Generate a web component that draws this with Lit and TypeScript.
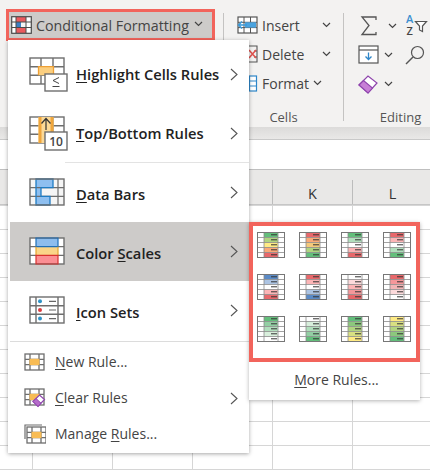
import { LitElement, html, css, svg } from "lit";
import { customElement } from "lit/decorators.js";

const G = "#6e6e6e";
const chevR = html`<svg class="chevr" width="8" height="13" viewBox="0 0 8 13"><path d="M1 1l6 5.5L1 12" fill="none" stroke="#555" stroke-width="1.1"/></svg>`;
const chevD = html`<svg class="chevd" width="9" height="6" viewBox="0 0 9 6"><path d="M1 1l3.5 3.5L8 1" fill="none" stroke="#444" stroke-width="1.2"/></svg>`;

function baseGrid() {
  return svg`<g fill="none" stroke="${G}" stroke-width="1.4">
    <rect x="1" y="1" width="34" height="26"/>
    <path d="M1 9.7h34M1 18.3h34M12 1v26M24 1v26"/></g>`;
}

const iconHighlight = html`<svg width="40" height="36" viewBox="0 0 40 36">
  ${baseGrid()}
  <rect x="9.5" y="9.7" width="15" height="8.6" fill="#fbcf80"/>
  <path d="M9.5 18.3V9.7h15v8.6" fill="none" stroke="#efa035" stroke-width="1.3"/>
  <rect x="16" y="17" width="22" height="17" fill="#fff" stroke="${G}" stroke-width="1.4"/>
  <path d="M30 20.5l-6 3 6 3M23.5 29.5h7" fill="none" stroke="#444" stroke-width="1"/>
</svg>`;

const iconTop = html`<svg width="40" height="36" viewBox="0 0 40 36">
  ${baseGrid()}
  <rect x="9.5" y="1" width="15" height="26" fill="#fcd996"/>
  <rect x="9.5" y="1" width="3" height="26" fill="#f0a63c"/>
  <rect x="21.5" y="1" width="3" height="26" fill="#f0a63c"/>
  <path d="M17 14V2.5M12.5 7.5l4.5-5 4.5 5" fill="none" stroke="#333" stroke-width="1.2"/>
  <rect x="16" y="16" width="22" height="18" fill="#fff" stroke="${G}" stroke-width="1.4"/>
  <text x="27" y="30" font-family="Open Sans, sans-serif" font-size="12" fill="#444" text-anchor="middle">10</text>
</svg>`;

const iconData = html`<svg width="40" height="30" viewBox="0 0 40 30">
  <rect x="1" y="1" width="34" height="26" fill="#f5f5f5"/>
  <rect x="7" y="1" width="17" height="8.7" fill="#8ebff0"/>
  <rect x="7" y="9.7" width="5" height="8.6" fill="#8ebff0"/>
  <rect x="7" y="18.3" width="14" height="8.7" fill="#8ebff0"/>
  <path d="M1 9.7h34M1 18.3h34M29 1v26" fill="none" stroke="${G}" stroke-width="1.2"/>
  <path d="M7 1v26h14v-8.7h-9V9.7h12V1z" fill="none" stroke="#1f7cc4" stroke-width="1.3"/>
  <rect x="1" y="1" width="34" height="26" fill="none" stroke="${G}" stroke-width="1.4"/>
</svg>`;

const iconScale = html`<svg width="40" height="30" viewBox="0 0 40 30">
  <rect x="1" y="1" width="34" height="26" fill="#fff"/>
  <rect x="7" y="1" width="22" height="8.7" fill="#8dbdee"/>
  <rect x="7" y="9.7" width="22" height="8.6" fill="#fad588"/>
  <rect x="7" y="18.3" width="22" height="8.7" fill="#fb8e93"/>
  <path d="M1 9.7h6M29 9.7h6M1 18.3h6M29 18.3h6" stroke="${G}" stroke-width="1.3"/>
  <rect x="1" y="1" width="34" height="26" fill="none" stroke="${G}" stroke-width="1.4"/>
  <path d="M7 9.7V1h22v8.7z" fill="none" stroke="#1f6fb8" stroke-width="1.2"/>
  <path d="M7 18.3V9.7M29 18.3V9.7" stroke="#e4a62f" stroke-width="1.2"/>
  <path d="M7 27v-8.7h22V27z" fill="none" stroke="#d8312f" stroke-width="1.2"/>
</svg>`;

const iconSets = html`<svg width="40" height="30" viewBox="0 0 40 30">
  <g fill="none" stroke="${G}" stroke-width="1.4">
    <rect x="1" y="1" width="34" height="26"/>
    <path d="M1 9.7h34M1 18.3h34M7 1v26M29 1v26"/></g>
  <circle cx="11" cy="5.3" r="2" fill="#2f94c8"/>
  <circle cx="11" cy="14" r="2" fill="#dc3d40"/>
  <circle cx="11" cy="22.6" r="2" fill="#2f94c8"/>
  <path d="M20 5.3h7M20 14h7M20 22.6h7" stroke="#666" stroke-width="1.2"/>
</svg>`;

const smallGrid = svg`<g fill="none" stroke="${G}" stroke-width="1.3">
  <rect x="1" y="1" width="19" height="16"/>
  <path d="M1 6.3h19M1 11.6h19M6 1v16M15 1v16"/></g>`;

const iconNew = html`<svg width="22" height="18" viewBox="0 0 22 18">
  ${smallGrid}<rect x="5.5" y="5.8" width="10" height="6.3" fill="#f8bc55"/>
</svg>`;
const iconClear = html`<svg width="22" height="20" viewBox="0 0 22 20">
  ${smallGrid}<rect x="5.5" y="5.8" width="10" height="6.3" fill="#f8bc55"/>
  <path d="M9 13.5l6.5-6.5 5 4.5-6.5 7z" fill="#fff" stroke="#8e44ad" stroke-width="1.2"/>
  <path d="M9 13.5l3-3 5 4.7-3 3.3z" fill="#b56cc9" stroke="#8e44ad" stroke-width="1"/>
</svg>`;
const iconManage = html`<svg width="22" height="20" viewBox="0 0 22 20">
  <path d="M18 1H1v14" fill="none" stroke="${G}" stroke-width="1.2"/>
  <g transform="translate(2 2)">${smallGrid}<rect x="5.5" y="5.8" width="10" height="6.3" fill="#f8bc55"/></g>
</svg>`;

const iconTitle = html`<svg width="21" height="18" viewBox="0 0 21 18">
  <rect x="0.7" y="0.7" width="19.6" height="16.6" fill="#fff"/>
  <rect x="5" y="1" width="10" height="5" fill="#ea5a5e"/>
  <rect x="5" y="6" width="5" height="5" fill="#3c7fc4"/>
  <rect x="10" y="6" width="5" height="5" fill="#f4f4f4"/>
  <rect x="5" y="11" width="10" height="6" fill="#ea5a5e"/>
  <path d="M.7 6h19.6M.7 11.5h19.6M5 1v16M15 1v16" stroke="#4a4a4a" stroke-width="1" fill="none"/>
  <rect x="0.7" y="0.7" width="19.6" height="16.6" fill="none" stroke="#4a4a4a" stroke-width="1.2"/>
</svg>`;

const iconInsert = html`<svg width="21" height="18" viewBox="0 0 21 18">
  <rect x="1" y="1" width="19" height="16" fill="#fff" stroke="#555" stroke-width="1.2"/>
  <path d="M1 6.3h19M1 11.6h19M7 1v16M13.5 1v16" stroke="#555" stroke-width="1"/>
  <rect x="8" y="6.3" width="11" height="5.3" fill="#4aa3df"/>
  <path d="M10 9H1.5M5 5.5L1.5 9 5 12.5" fill="none" stroke="#3b9ad9" stroke-width="1.5"/>
</svg>`;
const iconDelete = html`<svg width="21" height="18" viewBox="0 0 21 18">
  <path d="M11 1h9v16h-9M20 6h-3M20 12h-3" fill="none" stroke="#555" stroke-width="1.1"/>
  <path d="M12 5l7 8M19 5l-7 8" stroke="#e0504c" stroke-width="1.5"/>
</svg>`;
const iconFormat = html`<svg width="21" height="18" viewBox="0 0 21 18">
  <rect x="12.5" y="2" width="7" height="15" fill="#fff" stroke="#2e86c9" stroke-width="1.2"/>
  <path d="M12.5 7h7M12.5 12h7" stroke="#2e86c9" stroke-width="1"/>
</svg>`;

const iconSigma = html`<svg class="sigma" width="18" height="20" viewBox="0 0 18 20"><path d="M16 4V1H2l7 8.5L2 18.5h14V16" fill="none" stroke="#555" stroke-width="1.3"/></svg>`;
const iconSort = html`<svg class="sort" width="23" height="28" viewBox="0 0 23 28">
  <text x="0" y="13" font-family="Open Sans, sans-serif" font-size="11" font-weight="600" fill="#3b8fd0">A</text>
  <text x="0.5" y="25" font-family="Open Sans, sans-serif" font-size="11" font-weight="600" fill="#444">Z</text>
  <path d="M9.5 11.5h11l-4 4.5v5.5l-3-1.5V16z" fill="#fff" stroke="#555" stroke-width="1.2"/>
</svg>`;
const iconFill = html`<svg width="21" height="19" viewBox="0 0 21 19">
  <rect x="1" y="1" width="19" height="17" fill="#fff" stroke="#555" stroke-width="1.2"/>
  <path d="M1 5h19" stroke="#555" stroke-width="1.2"/>
  <path d="M10.5 7.5v7M7.5 11.5l3 3 3-3" fill="none" stroke="#2e86c9" stroke-width="1.3"/>
</svg>`;
const iconSearch = html`<svg width="21" height="20" viewBox="0 0 21 20"><circle cx="12.5" cy="7.5" r="6" fill="none" stroke="#555" stroke-width="1.2"/><path d="M8 12l-7 7" stroke="#555" stroke-width="1.4"/></svg>`;
const iconEraser = html`<svg width="21" height="20" viewBox="0 0 21 20">
  <path d="M1 11l9-9 9 7-9 10z" fill="#fff" stroke="#8e44ad" stroke-width="1.2"/>
  <path d="M1 11l4.5-4.5 9 7.5-4.5 5z" fill="#c77fd6" stroke="#8e44ad" stroke-width="1.1"/>
</svg>`;

const SCALES: string[][] = [
  ["#63be7b", "#b1d580", "#ffeb84", "#fbaa77", "#e8686b"],
  ["#e8686b", "#fbaa77", "#f5c97a", "#b1d580", "#63be7b"],
  ["#63be7b", "#b1dfbd", "#ffffff", "#fcb5b6", "#e8686b"],
  ["#e8686b", "#fcb5b6", "#ffffff", "#b1dfbd", "#63be7b"],
  ["#5a8ac6", "#acc4e3", "#ffffff", "#fcb5b6", "#e8686b"],
  ["#e8686b", "#fcb5b6", "#ffffff", "#acc4e3", "#5a8ac6"],
  ["#ffffff", "#fcdadb", "#fcb5b6", "#f5979a", "#e8686b"],
  ["#e8686b", "#f5979a", "#f2b5b6", "#fcdadb", "#ffffff"],
  ["#63be7b", "#92cfa3", "#b1dfbd", "#d8efdc", "#ffffff"],
  ["#ffffff", "#d8efdc", "#b1dfbd", "#92cfa3", "#63be7b"],
  ["#63be7b", "#8cc87d", "#b1d580", "#d8e082", "#ffeb84"],
  ["#ffeb84", "#d8e082", "#b1d580", "#8cc87d", "#63be7b"],
];

function scaleIcon(colors: string[]) {
  return html`<svg class="scale" width="28" height="26" viewBox="0 0 28 26">
    <rect x="0.5" y="0.5" width="27" height="25" fill="#fff"/>
    ${colors.map((c, i) => svg`<rect x="7" y="${0.5 + i * 5}" width="14" height="5" fill="${c}"/>`)}
    ${[1, 2, 3, 4].map((i) => svg`<path d="M0.5 ${0.5 + i * 5}h27" stroke="#8a8a8a" stroke-width="0.8"/>`)}
    ${colors.map((_, i) => svg`<path d="M14 ${2.8 + i * 5}h6" stroke="#333" stroke-width="1"/>`)}
    <path d="M7 0.5v25M21 0.5v25" stroke="#8a8a8a" stroke-width="0.8"/>
    <rect x="0.5" y="0.5" width="27" height="25" fill="none" stroke="#777" stroke-width="1"/>
  </svg>`;
}

@customElement("app-root")
export class AppRoot extends LitElement {
  static styles = css`
    :host {
      display: block;
      position: relative;
      width: 430px;
      height: 470px;
      overflow: hidden;
      background: #fff;
      font-family: "Open Sans", "Noto Sans", sans-serif;
      color: #333;
    }
    .ribbon {
      height: 127px;
      background: #f3f2f1;
      display: flex;
      box-sizing: border-box;
    }
    .cfgroup { width: 223px; padding: 9px 0 0 6px; box-sizing: border-box; flex: none; }
    .cfbtn {
      width: 209px;
      height: 32px;
      box-sizing: border-box;
      border: 3px solid #f2645c;
      background: #cdcbc9;
      display: flex;
      align-items: center;
      gap: 4px;
      padding-left: 2px;
      font-size: 14.25px;
      color: #444;
      white-space: nowrap;
    }
    .cfbtn .chevd { margin-left: 1px; margin-top: -3px; }
    .sep { width: 1px; background: #c4c3c2; margin: 13px 0 6px; flex: none; }
    .cells { width: 119px; flex: none; padding: 16px 0 0 13px; box-sizing: border-box; display: flex; flex-direction: column; }
    .cellrow { height: 29px; display: flex; align-items: flex-start; gap: 4px; font-size: 14px; color: #444; }
    .cellrow span { line-height: 20px; }
    .cellrow svg:first-child { flex: none; }
    .cellrow .chevd { margin-top: 6px; }
    .gap1 { width: 10px; }
    .gap2 { width: 14px; }
    .lbl { font-size: 13px; color: #555; text-align: center; line-height: 16px; }
    .cells .lbl { margin-top: 6px; padding-right: 13px; }
    .editing { flex: 1; padding: 16px 0 0 14px; box-sizing: border-box; display: flex; flex-direction: column; }
    .edrow { height: 29px; display: grid; grid-template-columns: 24px 23px 25px; justify-items: start; align-items: start; }
    .edrow .chevd { margin: 7px 0 0 2px; }
    .edrow .sigma { margin-left: 2px; }
    .edrow:first-child .chevd { margin-left: 6px; }
    .edrow .sort { margin: -6px 0 0 1px; }
    .editing .lbl { margin-top: 6px; padding-left: 13px; }
    .shade { height: 13px; background: linear-gradient(#dcdbda, #e9e8e7); border-bottom: 1px solid #c9c9c9; box-sizing: border-box; }
    .fbar { height: 30px; background: #fff; border-bottom: 1px solid #bfbfbf; box-sizing: border-box; }
    .heads {
      height: 35px;
      background: #e9e8e7;
      border-bottom: 1px solid #c6c6c6;
      box-sizing: border-box;
      display: grid;
      grid-template-columns: 272px 80px 80px;
      align-items: end;
      font-size: 14.5px;
      color: #333;
    }
    .heads div { text-align: center; height: 24px; line-height: 27px; border-left: 1px solid #bcbcbc; box-sizing: border-box; }
    .heads div:first-child { border: 0; }
    .sheet {
      height: 265px;
      background-color: #fff;
      background-image:
        linear-gradient(to bottom, #d6d6d6 1px, transparent 1px),
        linear-gradient(to right, #d6d6d6 1px, transparent 1px);
      background-size: 100% 24px, 80px 100%;
      background-position: 0 0, 32px 0;
    }
    .menu {
      position: absolute;
      left: 8px;
      top: 40px;
      width: 241px;
      height: 413px;
      box-sizing: border-box;
      background: #fff;
      padding: 5px 0 0 2px;
      box-shadow: 0 1px 4px rgba(0, 0, 0, 0.35);
      display: flex;
      flex-direction: column;
    }
    .big {
      height: 59px;
      flex: none;
      display: grid;
      grid-template-columns: 66px 1fr 19px;
      align-items: center;
      font-size: 14.7px;
      font-weight: 600;
      color: #222;
    }
    .big > svg:first-child { margin-left: 19px; }
    .big span, .small span { position: relative; }
    .big span { top: 1px; }
    .big.up span { top: -1px; }
    .big .chevr { margin-top: -1px; }
    .big.active { background: #cdcbc9; }
    .hair { height: 1px; margin: -1px 0 0 55px; background: #e3e3e3; flex: none; }
    .rule { height: 1px; background: #dcdcdc; margin: 1px 0 2px; flex: none; }
    .small {
      height: 36px;
      flex: none;
      display: grid;
      grid-template-columns: 45px 1fr 19px;
      align-items: center;
      font-size: 14px;
      color: #444;
    }
    .small > svg:first-child { margin-left: 14px; }
    .small span { top: -1px; }
    u { text-underline-offset: 2px; text-decoration-thickness: 1px; }
    .sub {
      position: absolute;
      left: 249px;
      top: 222px;
      width: 171px;
      height: 178px;
      background: #fff;
      box-shadow: 0 1px 4px rgba(0, 0, 0, 0.3);
      display: flex;
      flex-direction: column;
    }
    .scalebox {
      height: 140px;
      box-sizing: border-box;
      border: 4px solid #f2645c;
      padding: 6px 0 0 4px;
      display: grid;
      grid-template-columns: repeat(4, 42px);
      grid-auto-rows: 42px;
    }
    .scale { display: block; }
    .more {
      flex: 1;
      display: flex;
      align-items: center;
      justify-content: center;
      padding: 0 0 4px 4px;
      font-size: 14px;
      color: #444;
    }
  `;

  render() {
    return html`
      <div class="ribbon">
        <div class="cfgroup">
          <div class="cfbtn">${iconTitle}<span>Conditional Formatting</span>${chevD}</div>
        </div>
        <div class="sep"></div>
        <div class="cells">
          <div class="cellrow">${iconInsert}<span>Insert</span><i class="gap2"></i>${chevD}</div>
          <div class="cellrow">${iconDelete}<span>Delete</span><i class="gap1"></i>${chevD}</div>
          <div class="cellrow">${iconFormat}<span>Format</span>${chevD}</div>
          <div class="lbl">Cells</div>
        </div>
        <div class="sep"></div>
        <div class="editing">
          <div class="edrow">${iconSigma}${chevD}${iconSort}</div>
          <div class="edrow">${iconFill}${chevD}${iconSearch}</div>
          <div class="edrow">${iconEraser}${chevD}</div>
          <div class="lbl">Editing</div>
        </div>
      </div>
      <div class="shade"></div>
      <div class="fbar"></div>
      <div class="heads"><div></div><div>K</div><div>L</div></div>
      <div class="sheet"></div>

      <div class="menu">
        <div class="big up">${iconHighlight}<span><u>H</u>ighlight Cells Rules</span>${chevR}</div>
        <div class="big up">${iconTop}<span><u>T</u>op/Bottom Rules</span>${chevR}</div>
        <div class="hair"></div>
        <div class="big">${iconData}<span><u>D</u>ata Bars</span>${chevR}</div>
        <div class="big active">${iconScale}<span>Color <u>S</u>cales</span>${chevR}</div>
        <div class="big">${iconSets}<span><u>I</u>con Sets</span>${chevR}</div>
        <div class="rule"></div>
        <div class="small">${iconNew}<span><u>N</u>ew Rule...</span></div>
        <div class="small">${iconClear}<span><u>C</u>lear Rules</span>${chevR}</div>
        <div class="small">${iconManage}<span>Manage <u>R</u>ules...</span></div>
      </div>

      <div class="sub">
        <div class="scalebox">${SCALES.map((c) => scaleIcon(c))}</div>
        <div class="more"><span><u>M</u>ore Rules...</span></div>
      </div>
    `;
  }
}
